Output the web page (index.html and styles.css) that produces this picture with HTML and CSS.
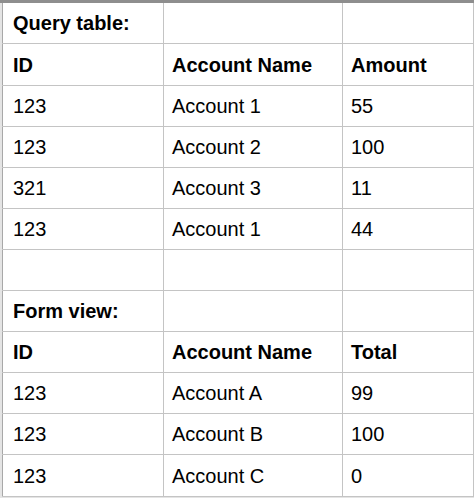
FILE: index.html
```html
<!DOCTYPE html>
<html>
<head>
<meta charset="utf-8">
<link rel="stylesheet" href="styles.css">
</head>
<body>
<div class="frame">
<table class="sheet">
<colgroup><col class="c1"><col class="c2"><col class="c3"></colgroup>
<tr><td class="b">Query table:</td><td></td><td></td></tr>
<tr class="tall"><td class="b">ID</td><td class="b">Account Name</td><td class="b">Amount</td></tr>
<tr><td>123</td><td>Account 1</td><td>55</td></tr>
<tr><td>123</td><td>Account 2</td><td>100</td></tr>
<tr><td>321</td><td>Account 3</td><td>11</td></tr>
<tr><td>123</td><td>Account 1</td><td>44</td></tr>
<tr><td></td><td></td><td></td></tr>
<tr><td class="b">Form view:</td><td></td><td></td></tr>
<tr><td class="b">ID</td><td class="b">Account Name</td><td class="b">Total</td></tr>
<tr><td>123</td><td>Account A</td><td>99</td></tr>
<tr><td>123</td><td>Account B</td><td>100</td></tr>
<tr class="tall"><td>123</td><td>Account C</td><td>0</td></tr>
</table>
</div>
</body>
</html>
```
FILE: styles.css
```css
html, body {
  margin: 0;
  padding: 0;
  background: #e4e4e4;
  width: 474px;
  height: 498px;
  overflow: hidden;
}
.frame {
  border-top: 3px solid #8e8e8e;
  padding-left: 2px;
  height: 495px;
  background: #e4e4e4;
}
.sheet {
  border-collapse: collapse;
  table-layout: fixed;
  width: 471px;
  background: #fff;
  font-family: "Liberation Sans", Arial, Helvetica, sans-serif;
  font-size: 20px;
  color: #000;
  border-top: 0;
}
.c1 { width: 161px; }
.c2 { width: 179px; }
.c3 { width: 131px; }
.sheet td {
  border: 1px solid #c4c4c4;
  height: 40px;
  padding: 0 0 0 8px;
  vertical-align: middle;
  line-height: 22px;
  white-space: nowrap;
}
.sheet td:first-child {
  border-left: 1px solid #a8a8a8;
  padding-left: 10px;
}
.sheet tr:first-child td {
  border-top: 0;
}
.sheet tr.tall td {
  height: 41px;
}
.b {
  font-weight: bold;
}
```
